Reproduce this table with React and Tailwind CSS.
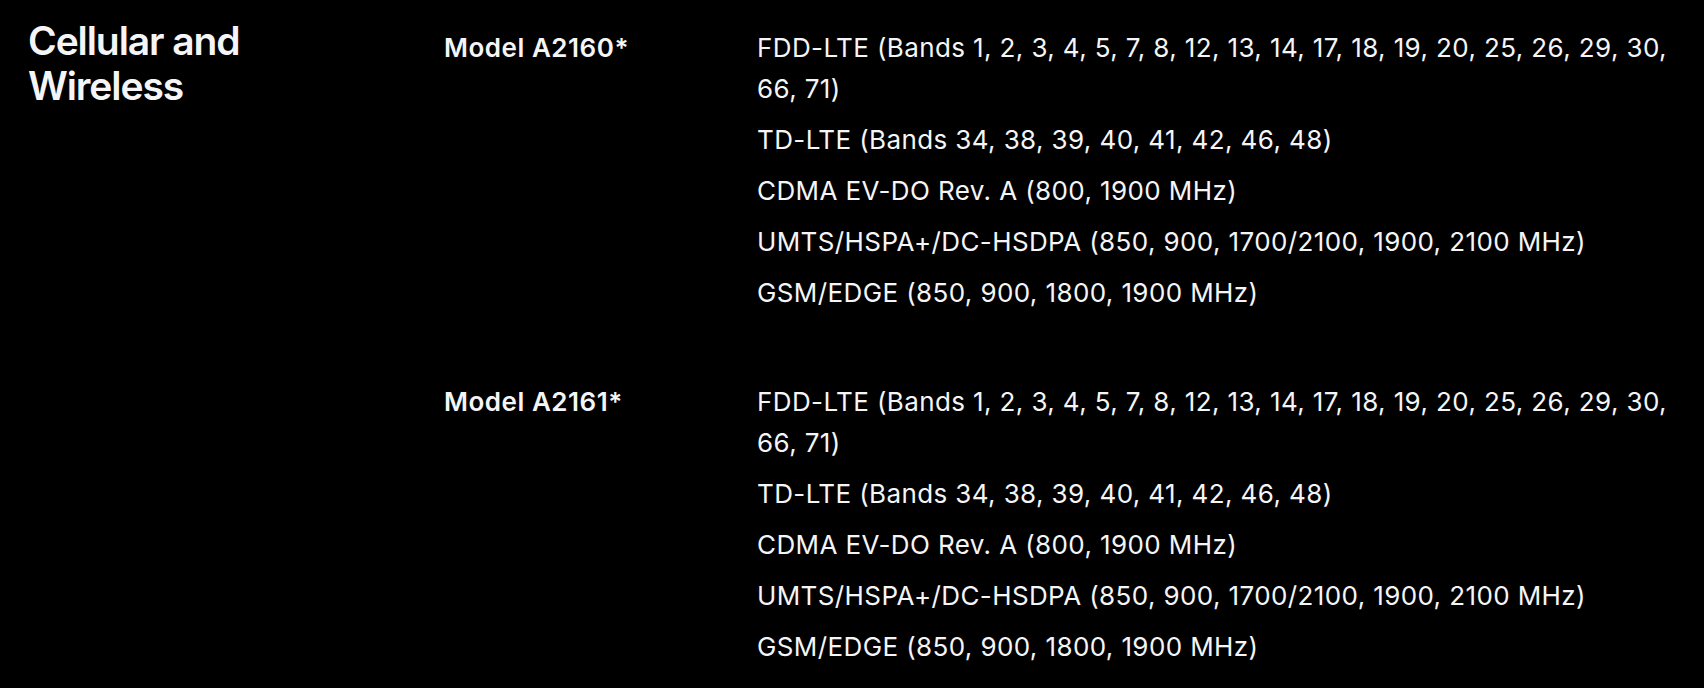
import React from "react";

const bands = [
  "FDD-LTE (Bands 1, 2, 3, 4, 5, 7, 8, 12, 13, 14, 17, 18, 19, 20, 25, 26, 29, 30, 66, 71)",
  "TD-LTE (Bands 34, 38, 39, 40, 41, 42, 46, 48)",
  "CDMA EV-DO Rev. A (800, 1900 MHz)",
  "UMTS/HSPA+/DC-HSDPA (850, 900, 1700/2100, 1900, 2100 MHz)",
  "GSM/EDGE (850, 900, 1800, 1900 MHz)",
];

const models = ["Model A2160*", "Model A2161*"];

export default function App() {
  return (
    <div
      className="bg-black text-[#f5f5f7] w-full min-h-[688px] flex px-[28px] pt-[18px] antialiased"
      style={{ fontFamily: "Inter, 'Noto Sans', sans-serif" }}
    >
      <h2 className="w-[416px] shrink-0 text-[39px] leading-[45px] font-semibold tracking-[-0.028em]">
        <span className="block max-w-[300px]">Cellular and Wireless</span>
      </h2>
      <div className="flex-1 flex flex-col gap-[68px] pt-[9px]">
        {models.map((m) => (
          <div key={m} className="flex">
            <div className="w-[313px] shrink-0 text-[26px] leading-[41px] font-semibold tracking-[0.02em]">
              {m}
            </div>
            <ul className="flex-1 flex flex-col gap-[10px] text-[26px] leading-[41px] font-normal tracking-[0.015em]">
              {bands.map((b) => (
                <li key={b}>{b}</li>
              ))}
            </ul>
          </div>
        ))}
      </div>
    </div>
  );
}
